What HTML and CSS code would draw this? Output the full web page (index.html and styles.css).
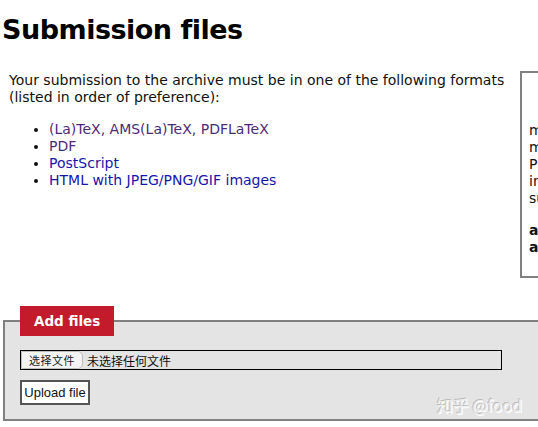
FILE: index.html
```html
<!DOCTYPE html>
<html>
<head>
<meta charset="utf-8">
<link rel="stylesheet" href="styles.css">
</head>
<body>
<div class="page">
  <h1 class="title">Submission files</h1>
  <div class="main">
    <div class="content">
      <p class="intro">Your submission to the archive must be in one of the following formats (listed in order of preference):</p>
      <ul class="formats">
        <li><a class="visited" href="#">(La)TeX, AMS(La)TeX, PDFLaTeX</a></li>
        <li><a class="visited" href="#">PDF</a></li>
        <li><a class="link" href="#">PostScript</a></li>
        <li><a class="link" href="#">HTML with JPEG/PNG/GIF images</a></li>
      </ul>
    </div>
    <aside class="sidebar">
      <p class="side-text">many files<br>may be<br>Please<br>include<br>submit</p>
      <p class="side-bold">all files<br>are</p>
    </aside>
  </div>
  <fieldset class="upload">
    <legend class="legend">Add files</legend>
    <div class="file-input">
      <span class="file-btn">选择文件</span>
      <span class="file-none">未选择任何文件</span>
    </div>
    <button class="upload-btn" type="button">Upload file</button>
  </fieldset>
  <div class="watermark">知乎 @food</div>
</div>
</body>
</html>
```
FILE: styles.css
```css
html, body {
  margin: 0;
  padding: 0;
  background: #fff;
  overflow: hidden;
}
.page {
  position: relative;
  width: 538px;
  height: 427px;
  overflow: hidden;
  font-family: "DejaVu Sans", "Noto Sans CJK SC", sans-serif;
  color: #111;
}
.title {
  margin: 0;
  padding: 14px 0 0 2px;
  font-family: "DejaVu Sans", sans-serif;
  font-weight: bold;
  font-size: 27px;
  line-height: 32px;
  color: #000;
  letter-spacing: -0.5px;
}
.main {
  display: flex;
  align-items: flex-start;
  margin-top: 26px;
  width: 760px;
}
.content {
  width: 500px;
  padding-left: 9px;
  flex: none;
}
.intro {
  margin: 0;
  font-size: 14px;
  line-height: 17px;
}
.formats {
  margin: 15px 0 0 0;
  padding-left: 40px;
  font-size: 14px;
  line-height: 17px;
}
.formats a { text-decoration: none; }
.visited { color: #4e2a76; }
.link { color: #1616a8; }
.sidebar {
  flex: none;
  margin-left: 11px;
  margin-top: -1px;
  width: 200px;
  height: 207px;
  border: 2px solid #808080;
  padding: 49px 0 0 7px;
  box-sizing: border-box;
  font-size: 14px;
  line-height: 17px;
}
.side-text { margin: 0; }
.side-bold { margin: 15px 0 0 0; font-weight: bold; }
.upload {
  margin: 28px 0 0 3px;
  width: 620px;
  box-sizing: border-box;
  border: 2px solid #808080;
  background: #e4e4e4;
  padding: 14px 0 14px 15px;
}
.legend {
  background: #c31b2c;
  color: #fff;
  font-weight: bold;
  font-size: 13.5px;
  line-height: 30px;
  padding: 0 14px;
  margin-left: 0;
}
.file-input {
  display: flex;
  align-items: center;
  width: 480px;
  height: 18px;
  border: 1px solid #000;
  font-family: "Noto Sans CJK SC", sans-serif;
  font-size: 12px;
  box-sizing: content-box;
}
.file-btn {
  display: inline-block;
  background: #f3f3f3;
  border: 1px solid #bdbdbd;
  border-radius: 0 5px 5px 0;
  padding: 0 7px;
  height: 16px;
  line-height: 16px;
  font-size: 11px;
  letter-spacing: 0.5px;
  color: #222;
}
.file-none {
  margin-left: 4px;
  color: #111;
}
.upload-btn {
  display: block;
  margin-top: 10px;
  height: 25px;
  width: 70px;
  padding: 0;
  background: #fff;
  border: 2px solid #555;
  border-radius: 0;
  font-family: "Liberation Sans", sans-serif;
  font-size: 13px;
  color: #111;
}
.watermark {
  position: absolute;
  left: 437px;
  top: 393px;
  font-family: "Noto Sans CJK SC", sans-serif;
  font-size: 16px;
  color: #ededed;
  text-shadow: -1px -1px 0 #bdbdbd, 1px 1px 0 #fff;
}
```
